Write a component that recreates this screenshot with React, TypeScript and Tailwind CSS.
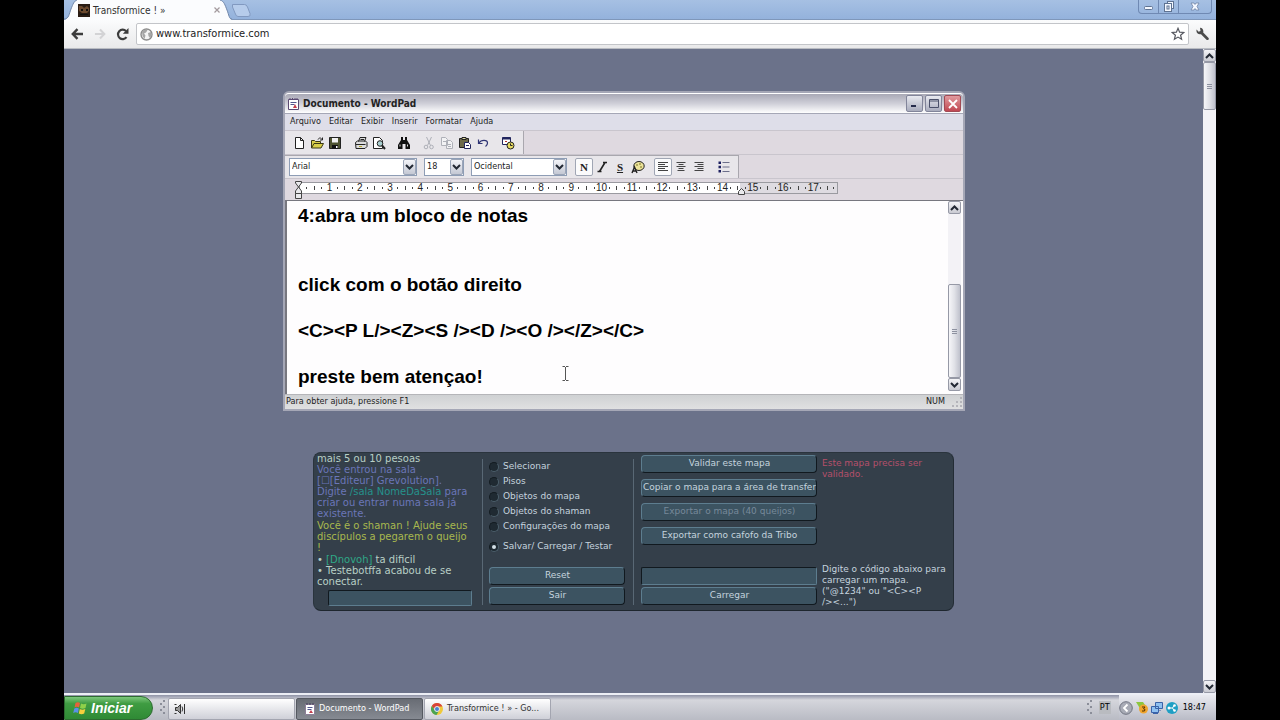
import { useState, type ReactNode } from "react";

const tahoma = "font-['DejaVu_Sans_Condensed','DejaVu_Sans',sans-serif]";

function Chevron({ up = false }: { up?: boolean }) {
  return (
    <svg width="9" height="6" viewBox="0 0 9 6" fill="none" stroke="#222833" strokeWidth="2">
      <path d={up ? "M1 5 4.5 1.5 8 5" : "M1 1 4.5 4.5 8 1"} />
    </svg>
  );
}

function ScrollButton({ up = false }: { up?: boolean }) {
  return (
    <button
      aria-label={up ? "Subir" : "Descer"}
      className="flex h-[13px] w-full shrink-0 items-center justify-center rounded-xs border border-[#9699a6] bg-linear-to-b from-[#f4f4f7] to-[#c9cad2]"
    >
      <Chevron up={up} />
    </button>
  );
}

function Thumb({ className }: { className: string }) {
  return (
    <div
      className={`flex w-full flex-col items-center justify-center gap-px rounded-xs border border-[#9699a6] bg-linear-to-r from-[#f6f6f9] via-[#e0e1e7] to-[#bfc1cc] ${className}`}
    >
      <span className="h-px w-[5px] bg-[#8d91a0]" />
      <span className="h-px w-[5px] bg-[#8d91a0]" />
      <span className="h-px w-[5px] bg-[#8d91a0]" />
    </div>
  );
}

/* ---------- Browser ---------- */

function BrowserTabs() {
  return (
    <div className="flex h-5 justify-between border-b border-[#7f97ba] bg-linear-to-b from-[#a6c0e3] to-[#94b2dc]">
      <div className="flex">
        <div className="relative h-5 w-[168px]">
          <svg className="absolute inset-0" width="168" height="20" viewBox="0 0 168 20">
            <path d="M0 20C5 19 5 14 7 9S10 1 13 0H156C160 1 161 5 163 10S165 19 168 20Z" fill="#fbfcfe" />
            <path d="M0 19C5 19 5 14 7 9S10 1 13 0M156 0C160 1 161 5 163 10S165 19 168 19" fill="none" stroke="#7187aa" />
          </svg>
          <div className={`relative flex h-5 items-center pr-3 pl-[14px] text-[10px] text-[#303030] ${tahoma}`}>
            <svg width="12" height="13" viewBox="0 0 12 13" className="mr-[3px]">
              <path d="M0 0h12v13H0z" fill="#2a1c14" />
              <path d="M1 2h3l2 2 3-2 2 2v3l-2 2H4L1 7z" fill="#6b492e" />
              <path d="M3 5h2v2H3zM8 5h2v2H8zM2 10h8v1H2z" fill="#12100f" />
            </svg>
            <span className="flex-1">Transformice ! »</span>
            <button aria-label="Fechar guia">
              <svg width="6" height="6" viewBox="0 0 6 6" stroke="#a39a9e" strokeWidth="1.2">
                <path d="M.5.5 5.5 5.5M5.5.5.5 5.5" />
              </svg>
            </button>
          </div>
        </div>
        <button aria-label="Nova guia" className="self-start">
          <svg width="20" height="17" viewBox="0 0 20 17">
            <path d="M.5 4.500H12.500Q14.500 4.500 15.500 7L18 13.500Q19 16.500 16 16.500H6Q4 16.500 3 13L.5 7Z" fill="#b6cceb" stroke="#8199c0" />
          </svg>
        </button>
      </div>
      <div className="mr-1 flex h-[14px] rounded-b border border-t-0 border-[#6f89b3] text-white">
        <button aria-label="Minimizar" className="flex w-5 items-center justify-center border-r border-[#6f89b3]">
          <svg width="11" height="14" viewBox="0 0 11 14">
            <rect x="1.500" y="6.500" width="8" height="3" rx="1" fill="#f4f8ff" stroke="#5f7392" />
          </svg>
        </button>
        <button aria-label="Restaurar" className="flex w-5 items-center justify-center border-r border-[#6f89b3]">
          <svg width="12" height="14" viewBox="0 0 12 14" fill="#f4f8ff" stroke="#5f7392">
            <rect x="4.500" y="1.500" width="6" height="7" />
            <rect x="1.500" y="3.500" width="7" height="8" />
            <rect x="4" y="6" width="2" height="3" />
          </svg>
        </button>
        <button aria-label="Fechar" className="flex w-8 items-center justify-center">
          <svg width="10" height="13" viewBox="0 0 10 13">
            <path d="M1 3h3l1 1.500L6 3h3L7 6.500 9 10H6L5 8.500 4 10H1l2-3.500z" fill="#f4f8ff" stroke="#6f83a6" strokeWidth=".8" />
          </svg>
        </button>
      </div>
    </div>
  );
}

function AddressBar() {
  return (
    <div className="flex h-[29px] items-center border-b border-[#b9bcc2] bg-linear-to-b from-[#fbfcfd] to-[#e9e9ea] pr-[6px] pl-[7px]">
      <button aria-label="Voltar">
        <svg width="13" height="12" viewBox="0 0 13 12" fill="none" stroke="#3c3c3c" strokeWidth="2.400">
          <path d="M12 6H2M6.500 1.200 1.800 6l4.700 4.800" />
        </svg>
      </button>
      <button aria-label="Avançar" className="ml-[10px]">
        <svg width="12" height="12" viewBox="0 0 13 12" fill="none" stroke="#d3d3d5" strokeWidth="2.200">
          <path d="M1 6h10M6.500 1.200 11.200 6l-4.700 4.800" />
        </svg>
      </button>
      <button aria-label="Recarregar" className="ml-[10px]">
        <svg width="13" height="13" viewBox="0 0 13 13">
          <path d="M10.500 9.200A4.700 4.700 0 1 1 10 3" fill="none" stroke="#3c3c3c" strokeWidth="2.200" />
          <path d="M12.500 0v5.800H6.800z" fill="#3c3c3c" />
        </svg>
      </button>
      <div className="ml-[7px] flex h-[22px] flex-1 items-center rounded-xs border border-[#c3c5c9] bg-white pr-[3px] pl-[3px]">
        <svg width="13" height="13" viewBox="0 0 13 13">
          <circle cx="6.500" cy="6.500" r="5.500" fill="#f4f4f4" stroke="#8c8c8c" strokeWidth="1.400" />
          <path d="M2 3.500 5 1.500l2.500.8L6 4.500 4 5.500l1.500 2L4.500 11 2.500 8zM8 5l3-1 .8 3-1.800 3-1.500-2z" fill="#a6a6a6" />
        </svg>
        <input
          aria-label="Endereço"
          defaultValue="www.transformice.com"
          className={`ml-[3px] min-w-0 flex-1 text-[11px] text-[#222] outline-none ${tahoma}`}
        />
        <svg width="14" height="14" viewBox="0 0 14 14">
          <path d="M7 1.300 8.600 5.200l4.200.3-3.200 2.700 1 4.100L7 10.100l-3.600 2.200 1-4.100L1.200 5.500l4.200-.3z" fill="#fff" stroke="#55575f" strokeWidth="1.200" />
        </svg>
      </div>
      <button aria-label="Ferramentas" className="ml-[7px]">
        <svg width="14" height="14" viewBox="0 0 14 14">
          <path d="M4 .8 4.500 4 2.600 4.800.6 2.500C-.2 5.500 2 7.900 5 7.200l5.500 5.600c1.300 1 3-.5 2.100-1.900L7.200 5.500C7.800 3 6.500 1 4 .8z" fill="#4b4b4b" />
        </svg>
      </button>
    </div>
  );
}

/* ---------- WordPad ---------- */

function Tool({ label, pressed, children }: { label: string; pressed?: boolean; children: ReactNode }) {
  return (
    <button
      aria-label={label}
      className={`flex h-[18px] w-[18px] items-center justify-center ${pressed ? "rounded-xs border border-[#a0a6b4] bg-[#fbfbfc]" : ""}`}
    >
      <svg width="14" height="14" viewBox="0 0 14 14" fill="none" stroke="#222">
        {children}
      </svg>
    </button>
  );
}

function Combo({ label, value, width }: { label: string; value: string; width: string }) {
  return (
    <div className={`relative flex h-[18px] ${width}`}>
      <select
        aria-label={label}
        className={`h-full w-full appearance-none border border-[#8e9db5] bg-white pl-[2px] text-[9px] text-[#222] ${tahoma}`}
      >
        <option>{value}</option>
      </select>
      <span className="pointer-events-none absolute top-px right-px flex h-4 w-[13px] items-center justify-center rounded-xs border border-[#9ba5b8] bg-linear-to-b from-[#f3f4f8] to-[#c4c8d4]">
        <Chevron />
      </span>
    </div>
  );
}

function StandardToolbar() {
  return (
    <div className="flex border-b border-[#c9c5cd]">
      <div className="flex h-[23px] items-center border-r border-[#a9a7ae] bg-[#e8e6ea] pr-[6px] pl-[5px]">
        <Tool label="Novo">
          <path d="M3.500 1.500h5l3 3v8h-8zM8.500 1.500v3h3" fill="#fff" />
        </Tool>
        <Tool label="Abrir">
          <path d="M1.500 12V4.500h3l1 1h5V7M1.500 12 4 7.500h9.500L11 12z" fill="#d8cf4a" stroke="#3b3914" />
          <path d="M8 3.500C9 1.500 11 1.500 12 3.500M12.500 1.500v2.500H10" />
        </Tool>
        <Tool label="Salvar">
          <path d="M1.500 1.500h11v11h-11z" fill="#4e5330" />
          <path d="M4 2h6v4.500H4z" fill="#f2f2f2" stroke="none" />
          <path d="M4 9h6v3.500H4z" fill="#111" stroke="none" />
          <path d="M8 10h1.500v2H8z" fill="#fff" stroke="none" />
        </Tool>
        <span className="w-[8px]" />
        <Tool label="Imprimir">
          <path d="M4.500 5.500 6 1.500h6l-1.500 4M1.500 6.500 3.500 5h8l1.500 1.500v4l-2 2h-9z" fill="#ddd" />
          <path d="M2 8.500h9.500M6.500 3.500h3.500" />
          <path d="M5 10.500h3" stroke="#b7a92a" />
        </Tool>
        <Tool label="Visualizar impressão">
          <path d="M1.500 1.500h6l3 3v8h-9z" fill="#fff" />
          <circle cx="8" cy="7.500" r="2.800" fill="#a9cfd0" />
          <path d="m10 9.500 3 3.500" strokeWidth="2" />
        </Tool>
        <span className="w-[7px]" />
        <Tool label="Localizar">
          <path d="M4 1h2v3h2V1h2v3l3 5v4H8.500V8h-3v5H1V9l3-5z" fill="#111" stroke="none" />
          <path d="M3 8.500v2M10.500 8.500v2" stroke="#ddd" />
        </Tool>
        <span className="w-[7px]" />
        <Tool label="Recortar">
          <path d="m4.500 1 4 8.500M9.500 1 5.500 9.500" stroke="#aeb0b8" />
          <circle cx="4" cy="11" r="1.800" stroke="#aeb0b8" />
          <circle cx="9.500" cy="11" r="1.800" stroke="#aeb0b8" />
        </Tool>
        <Tool label="Copiar">
          <path d="M1.500 1.500h4l2 2v6h-6zM6.500 4.500h4l2 2v6h-6z" fill="#f2f2f4" stroke="#aeb0b8" />
          <path d="M3 5.500h3M8 8.500h3M8 10.500h3" stroke="#aeb0b8" />
        </Tool>
        <Tool label="Colar">
          <path d="M1.500 2.500h9v9h-9z" fill="#6d6a4a" />
          <path d="M4 1.500h4v2H4z" fill="#dcd9a0" />
          <path d="M6.500 6.500h4l2 2v4h-6z" fill="#fff" stroke="#23265e" />
          <path d="M8 9.500h3" stroke="#23265e" />
        </Tool>
        <Tool label="Desfazer">
          <path d="M2.500 3.500v4h4M3 7C5 3.500 11.500 3.500 11.500 7q0 2-2 3.500" stroke="#2f3474" strokeWidth="1.200" />
        </Tool>
        <span className="w-[7px]" />
        <Tool label="Data e hora">
          <path d="M1.500 1.500h8v7h-8z" fill="#fff" stroke="#22265e" />
          <path d="M1.500 2.500h8" stroke="#22265e" strokeWidth="2" />
          <path d="M4 5.500h2" stroke="#b33" />
          <circle cx="9.500" cy="9.500" r="3.500" fill="#e8dc62" />
          <path d="M9.500 7.500v2h2" />
        </Tool>
      </div>
    </div>
  );
}

function FormatToolbar() {
  return (
    <div className="flex border-b border-[#c9c5cd]">
      <div className="flex h-[23px] items-center border-t border-r border-[#a9a7ae] bg-[#e8e6ea] pr-[5px] pl-[4px]">
        <Combo label="Fonte" value="Arial" width="w-[128px]" />
        <span className="w-[7px]" />
        <Combo label="Tamanho" value="18" width="w-[40px]" />
        <span className="w-[7px]" />
        <Combo label="Script" value="Ocidental" width="w-[96px]" />
        <span className="w-[8px]" />
        <button className="h-[18px] w-[18px] rounded-xs border border-[#a0a6b4] bg-[#fbfbfc] font-['Liberation_Serif',serif] text-[11px] leading-none font-bold">
          N
        </button>
        <Tool label="Itálico">
          <path d="M10 2.500 4.500 11.500M8 2.500h4M2.500 11.500h4" strokeWidth="1.600" />
        </Tool>
        <button className="h-[18px] w-[18px] font-['Liberation_Serif',serif] text-[11px] leading-none font-bold underline">
          S
        </button>
        <Tool label="Cor">
          <ellipse cx="8" cy="6" rx="5.200" ry="4.500" fill="#ece39a" />
          <path d="M5 5h2M8 4h2M9 7h2" stroke="#7a7422" />
          <path d="m1 13 2.500-6L6 13M2 11h3" strokeWidth="1.400" />
        </Tool>
        <span className="w-[7px]" />
        <Tool label="Alinhar à esquerda" pressed>
          <path d="M2 2.500h10M2 4.500h7M2 6.500h10M2 8.500h7M2 10.500h10" stroke="#444" />
        </Tool>
        <Tool label="Centralizar">
          <path d="M2.500 2.500h9M4.500 4.500h5M2.500 6.500h9M4.500 8.500h5M3.500 10.500h7" stroke="#444" />
        </Tool>
        <Tool label="Alinhar à direita">
          <path d="M2.500 2.500h9M5.500 4.500h6M2.500 6.500h9M5.500 8.500h6M2.500 10.500h9" stroke="#444" />
        </Tool>
        <span className="w-[7px]" />
        <Tool label="Marcadores">
          <path d="M1.500 1.500h2.500v2.500h-2.500zM1.500 5.750h2.500v2.500h-2.500zM1.500 10h2.500v2.500h-2.500z" fill="#1d2060" stroke="none" />
          <path d="M5.500 2.500h7M5.500 7h7M5.500 11.500h7" stroke="#6c6f8a" />
        </Tool>
      </div>
    </div>
  );
}

function RulerMarks() {
  return (
    <>
      <span className="h-[2px] w-px justify-self-center bg-[#444]" />
      <span className="h-1 w-px justify-self-center bg-[#444]" />
      <span className="h-[2px] w-px justify-self-center bg-[#444]" />
    </>
  );
}

function Ruler() {
  const marks = Array.from({ length: 17 }, (_, i) => i + 1);
  return (
    <div className="relative h-[21px] pt-[3px] pl-[14px]">
      <div className="flex h-[12px] w-[539px] items-center border border-[#9a9aa0] bg-linear-to-r from-white from-82% to-[#dedbe1] to-82% pl-[3px]">
        <div className="grid w-[515px] grid-cols-17">
          {marks.map((n) => (
            <div key={n} className="grid grid-cols-4 items-center">
              <RulerMarks />
              <span className="flex justify-center font-['Liberation_Sans',sans-serif] text-[10px] leading-none text-[#222]">
                {n}
              </span>
            </div>
          ))}
        </div>
        <div className="grid w-5 grid-cols-3 items-center">
          <RulerMarks />
        </div>
      </div>
      <svg className="absolute top-[2px] left-[9px]" width="9" height="18" viewBox="0 0 9 18" fill="#e9e9ec" stroke="#444">
        <path d="M1.500.5h6V2L4.500 6 1.500 2zM1.500 12.500V10l3-4 3 4v2.500zM1.500 12.500h6v5h-6z" />
      </svg>
      <svg className="absolute top-[8px] left-[452px]" width="9" height="8" viewBox="0 0 9 8" fill="#e9e9ec" stroke="#444">
        <path d="M1.500 7.500V4.500l3-3 3 3v3z" />
      </svg>
    </div>
  );
}

const documentText = `4:abra um bloco de notas


click com o botão direito

<C><P L/><Z><S /><D /><O /></Z></C>

preste bem atençao!`;

function WordPad() {
  return (
    <section className={`w-full max-w-[682px] rounded-t-md border-2 border-[#a5a7b6] bg-[#dfd9e0] text-[#222] ${tahoma}`}>
      <header className="flex h-[20px] items-center rounded-t-sm border-t border-white bg-linear-to-b from-[#a9a9b6] via-[#cfcfd8] to-white pr-[2px] pl-[3px]">
        <svg width="11" height="12" viewBox="0 0 11 12">
          <path d="M.5 1.500h10v10H.5z" fill="#fff" stroke="#5b4a72" />
          <path d="M2 0v2M4.500 0v2M7 0v2M9 0v2" stroke="#5b4a72" />
          <path d="M2.500 4.500h6M2.500 6.500h4" stroke="#53578e" />
          <path d="M5 10 7 6l2 4z" fill="#c43d4d" />
        </svg>
        <h1 className="ml-[4px] flex-1 text-[10px] font-bold">Documento - WordPad</h1>
        <div className="flex gap-[2px]">
          <button aria-label="Minimizar" className="flex h-[17px] w-[17px] items-center justify-center rounded-xs border border-[#82859a] bg-linear-to-b from-[#e9eaf0] to-[#a9acbd]">
            <svg width="9" height="9" viewBox="0 0 9 9">
              <path d="M1 7h5" stroke="#262c4c" strokeWidth="2" />
            </svg>
          </button>
          <button aria-label="Maximizar" className="flex h-[17px] w-[17px] items-center justify-center rounded-xs border border-[#82859a] bg-linear-to-b from-[#e9eaf0] to-[#a9acbd]">
            <svg width="10" height="9" viewBox="0 0 10 9" fill="none" stroke="#4b506a">
              <path d="M.5.5h9v8h-9zM.5 2h9" />
            </svg>
          </button>
          <button aria-label="Fechar" className="flex h-[17px] w-[17px] items-center justify-center rounded-xs border border-[#a14a54] bg-linear-to-b from-[#e09a9f] to-[#c04652]">
            <svg width="10" height="10" viewBox="0 0 10 10" stroke="#fff" strokeWidth="1.800">
              <path d="m1 1 8 8M9 1 1 9" />
            </svg>
          </button>
        </div>
      </header>
      <nav className="flex h-[18px] items-center gap-[8px] border-t border-b border-t-[#a5a7b6] border-b-[#c9c5cd] bg-[#dedee9] pl-[5px] text-[9px]">
        <button>Arquivo</button>
        <button>Editar</button>
        <button>Exibir</button>
        <button>Inserir</button>
        <button>Formatar</button>
        <button>Ajuda</button>
      </nav>
      <StandardToolbar />
      <FormatToolbar />
      <Ruler />
      <div className="relative flex h-[194px] border-t border-l-2 border-[#77777f] bg-[#fefdfe] pr-[2px] pb-[3px]">
        <textarea
          aria-label="Documento"
          spellCheck={false}
          defaultValue={documentText}
          className="min-w-0 flex-1 resize-none overflow-hidden pt-[3px] pl-[11px] font-['Liberation_Sans',sans-serif] text-[19px] leading-[23px] font-bold text-black outline-none"
        />
        {/* Mouse pointer */}
        <svg className="absolute top-[165px] left-[275px]" width="7" height="15" viewBox="0 0 7 15" fill="none" stroke="#555">
          <path d="M.5.500H3M4 .5h2.500M3.500 1v13M.5 14.500H3M4 14.500h2.500" />
        </svg>
        <div className="flex w-[13px] flex-col bg-[#f3f2f6]">
          <ScrollButton up />
          <div className="flex-1" />
          <Thumb className="h-[94px]" />
          <ScrollButton />
        </div>
      </div>
      <footer className="flex h-[15px] items-center border-t border-[#b5b5b9] bg-linear-to-b from-[#cfd1d3] to-[#e0e0e1] pl-px text-[9px]">
        <span className="flex-1">Para obter ajuda, pressione F1</span>
        <span className="mr-[6px]">NUM</span>
        <svg width="12" height="12" viewBox="0 0 12 12" fill="#b4b4ba">
          <path d="M9 1h2v2H9zM5 5h2v2H5zM9 5h2v2H9zM1 9h2v2H1zM5 9h2v2H5zM9 9h2v2H9z" />
        </svg>
      </footer>
    </section>
  );
}

/* ---------- Map editor ---------- */

function GameButton({ children, disabled }: { children: ReactNode; disabled?: boolean }) {
  return (
    <button
      disabled={disabled}
      className="flex h-[18px] w-full items-center overflow-hidden rounded-sm border border-t-[#5d7d8f] border-r-[#11191f] border-b-[#11191f] border-l-[#5d7d8f] bg-[#3c5361] pl-px whitespace-nowrap text-[#c5d3de] disabled:text-[#77899a]"
    >
      <span className="mx-auto">{children}</span>
    </button>
  );
}

const modes = ["Selecionar", "Pisos", "Objetos do mapa", "Objetos do shaman", "Configurações do mapa", "Salvar/ Carregar / Testar"];

function MapEditor() {
  const [mode, setMode] = useState(modes[5]);
  return (
    <section className="flex h-[159px] w-full max-w-[641px] overflow-hidden rounded-lg border border-t-[#2a343d] border-r-[#232c35] border-b-[#1e262e] border-l-[#2a343d] bg-[#343f4a] font-['DejaVu_Sans',sans-serif] text-[9px] text-[#c5d3de]">
      {/* Chat */}
      <div className="flex w-[168px] flex-col pl-[3px] text-[10px] leading-[11px] text-[#b8cfc6]">
        <p>mais 5 ou 10 pesoas</p>
        <p className="text-[#6b76b8]">
          Você entrou na sala
          <br />
          [☐[Editeur] Grevolution].
          <br />
          Digite <span className="text-[#25928c]">/sala NomeDaSala</span> para
          <br />
          criar ou entrar numa sala já
          <br />
          existente.
        </p>
        <p className="mt-px text-[#a8b84e]">
          Você é o shaman ! Ajude seus
          <br />
          discípulos a pegarem o queijo
          <br />!
        </p>
        <p className="mt-px">
          • <span className="text-[#2fa887]">[Dnovoh]</span> ta dificil
        </p>
        <p>
          • Testebotffa acabou de se
          <br />
          conectar.
        </p>
        <input
          aria-label="Mensagem"
          className="mt-[3px] ml-[11px] h-4 w-[144px] rounded-xs border border-t-[#11191f] border-r-[#5d7d8f] border-b-[#5d7d8f] border-l-[#11191f] bg-[#3c5361] px-1"
        />
      </div>

      {/* Modes */}
      <div className="mt-[6px] mb-[5px] flex w-[152px] flex-col border-x border-[#596875] pr-[8px] pl-[6px]">
        <div className="flex flex-1 flex-col">
          {modes.map((m) => (
            <label key={m} className="flex h-[15px] items-center gap-1 last:mt-[5px]">
              <input
                type="radio"
                name="mode"
                checked={m === mode}
                onChange={() => setMode(m)}
                className="flex size-[10px] appearance-none items-center justify-center rounded-full border border-t-[#141c22] border-r-[#4c5f6b] border-b-[#4c5f6b] border-l-[#141c22] bg-[#1f2a32] checked:before:size-1 checked:before:rounded-full checked:before:bg-[#d3dfe6]"
              />
              {m}
            </label>
          ))}
        </div>
        <div className="flex flex-col gap-[2px]">
          <GameButton>Reset</GameButton>
          <GameButton>Sair</GameButton>
        </div>
      </div>

      {/* Actions */}
      <div className="ml-[7px] flex w-[176px] flex-col justify-between pt-[2px] pb-[5px]">
        <div className="flex flex-col gap-[6px]">
          <GameButton>Validar este mapa</GameButton>
          <GameButton>Copiar o mapa para a área de transferência</GameButton>
          <GameButton disabled>Exportar o mapa (40 queijos)</GameButton>
          <GameButton>Exportar como cafofo da Tribo</GameButton>
        </div>
        <div className="flex flex-col gap-[2px]">
          <input
            id="map-code"
            className="h-[18px] w-full rounded-xs border border-t-[#11191f] border-r-[#5d7d8f] border-b-[#5d7d8f] border-l-[#11191f] bg-[#3c5361] px-1"
          />
          <GameButton>Carregar</GameButton>
        </div>
      </div>

      {/* Help */}
      <div className="ml-[5px] flex flex-1 flex-col justify-between pt-[5px] pb-[2px] leading-[11px]">
        <p className="text-[#b5506a]">
          Este mapa precisa ser
          <br />
          validado.
        </p>
        <label htmlFor="map-code">
          Digite o código abaixo para
          <br />
          carregar um mapa.
          <br />
          ("@1234" ou "&lt;C&gt;&lt;P
          <br />
          /&gt;&lt;...")
        </label>
      </div>
    </section>
  );
}

/* ---------- Taskbar ---------- */

function Grip() {
  return (
    <svg width="7" height="18" viewBox="0 0 7 18" fill="#8b8e99">
      <path d="M4 1h2v2H4zM1 4h2v2H1zM4 7h2v2H4zM1 10h2v2H1zM4 13h2v2H4z" />
    </svg>
  );
}

function Taskbar() {
  return (
    <footer className={`flex h-[27px] items-stretch border-t-2 border-[#eceef5] bg-linear-to-b from-[#8e92a6] via-[#d5d6dc] via-20% to-[#b9bbc4] text-[9px] ${tahoma}`}>
      <button className="mt-px flex w-[89px] items-center gap-[3px] rounded-r-xl border border-[#2d6b30] bg-linear-to-b from-[#7cc77c] via-[#3f9c42] via-30% to-[#2f8a35] pl-2 font-['Liberation_Sans',sans-serif] text-[14px] font-bold text-white italic">
        <svg width="15" height="14" viewBox="0 0 15 14">
          <path d="M2.500 2Q5 .5 7 2L6 6.500Q4 5 1.500 6.500z" fill="#e8613a" />
          <path d="M8 2.500q2.500 1.500 5.500 0L12.500 7Q9.500 8.500 7 7z" fill="#8fd04a" />
          <path d="M1.300 7.500q2.500-1.500 4.500 0L5 12Q2.500 10.500.2 12z" fill="#5a8fe8" />
          <path d="M6.800 8q2.500 1.500 5.500 0L11.200 12.500Q8.500 14 5.800 12.500z" fill="#f5cf3d" />
        </svg>
        Iniciar
      </button>
      <div className="ml-1 flex w-[11px] items-center justify-center">
        <Grip />
      </div>
      <div className="mt-[3px] flex gap-px">
        <button aria-label="Volume" className="flex w-[127px] items-center rounded-xs border border-[#a3a5b0] bg-linear-to-b from-white to-[#cfd0d8] pl-[5px]">
          <svg width="12" height="12" viewBox="0 0 12 12" fill="none" stroke="#333">
            <path d="M1.500 4.500h2l3-3v9l-3-3h-2z" fill="#999" />
            <path d="M8 3.500q1.500 2.500 0 5M10.500 1v10" />
            <path d="M.5 1.500h2M.5 10.500h2" />
          </svg>
        </button>
        <button className="flex w-[127px] items-center gap-[4px] rounded-xs border border-[#555961] bg-linear-to-b from-[#686c74] to-[#868a92] pl-[8px] text-white">
          <svg width="10" height="12" viewBox="0 0 10 12">
            <path d="M.5 1.500h9v10h-9z" fill="#fff" stroke="#8d7f98" />
            <path d="M2 0v2M5 0v2M8 0v2" stroke="#433c58" />
            <path d="M2.500 4.500h5M2.500 6.500h4" stroke="#53578e" />
            <path d="M4 10 6 7l2 3z" fill="#c43d4d" />
          </svg>
          Documento - WordPad
        </button>
        <button className="flex w-[127px] items-center gap-[4px] rounded-xs border border-[#a3a5b0] bg-linear-to-b from-white to-[#cfd0d8] pl-[6px] text-[#333]">
          <svg width="12" height="12" viewBox="0 0 12 12">
            <circle cx="6" cy="6" r="6" fill="#f0c93a" />
            <path d="M.8 3A6 6 0 0 1 11.400 3.500H6A2.500 2.500 0 0 0 3.600 6.800z" fill="#d8423a" />
            <path d="M.8 3A6 6 0 0 0 5.500 12L8.200 7.200A2.500 2.500 0 0 1 3.800 7.200z" fill="#4aa353" />
            <circle cx="6" cy="6" r="2.500" fill="#4a7fd0" stroke="#fff" strokeWidth=".8" />
          </svg>
          Transformice ! » - Go...
        </button>
      </div>
      <div className="flex-1" />
      <div className="flex items-center gap-[6px] pr-2">
        <Grip />
        <span className="bg-[#b9bbc0] px-px">PT</span>
      </div>
      <div className="flex items-center gap-[3px] bg-linear-to-b from-[#e9eaf0] to-[#b9bbc6] pr-[10px]">
        <button aria-label="Mostrar ícones ocultos">
          <svg width="14" height="14" viewBox="0 0 14 14">
            <circle cx="7" cy="7" r="6.300" fill="#a8abb6" stroke="#6f7380" />
            <path d="M8.500 3.500 5 7l3.500 3.500" fill="none" stroke="#fff" strokeWidth="1.800" />
          </svg>
        </button>
        <svg width="12" height="13" viewBox="0 0 12 13">
          <path d="M0 1h7l2 3-4 5z" fill="#8dc63f" />
          <circle cx="7.500" cy="8" r="4.500" fill="#f0a52d" />
          <path d="M6 6h3L7.500 7.800Q10 8 8.500 10H6" fill="none" stroke="#553300" />
        </svg>
        <svg width="12" height="12" viewBox="0 0 12 12" stroke="#3a62a8">
          <path d="M4.500.5h7v6h-7zM.5 4.500h7v6h-7z" fill="#8fc0f0" />
          <path d="M2 11.500h5M9 8v1" />
        </svg>
        <svg width="12" height="12" viewBox="0 0 12 12">
          <circle cx="6" cy="6" r="6" fill="#1f9fc4" />
          <path d="M3 6h3.500L8 3.500M6.500 6 8 8.500" fill="none" stroke="#fff" />
          <circle cx="3" cy="6" r="1.500" fill="#fff" />
          <circle cx="8.500" cy="3.500" r="1.300" fill="#fff" />
          <circle cx="8.500" cy="8.500" r="1.300" fill="#fff" />
        </svg>
        <time className="ml-[2px]">18:47</time>
      </div>
    </footer>
  );
}

export default function App() {
  return (
    <div className="min-h-screen bg-black px-16">
      <div className="flex min-h-screen flex-col bg-[#6b728a]">
        <BrowserTabs />
        <AddressBar />
        <div className="flex flex-1">
          <main className="flex flex-1 flex-col items-center gap-[41px] pt-[42px] [&>section:first-child]:mr-[19px]">
            <WordPad />
            <MapEditor />
          </main>
          <div className="flex w-[13px] flex-col bg-[#f3f2f6]">
            <ScrollButton up />
            <Thumb className="h-[48px]" />
            <div className="flex-1" />
            <ScrollButton />
          </div>
        </div>
        <Taskbar />
      </div>
    </div>
  );
}
